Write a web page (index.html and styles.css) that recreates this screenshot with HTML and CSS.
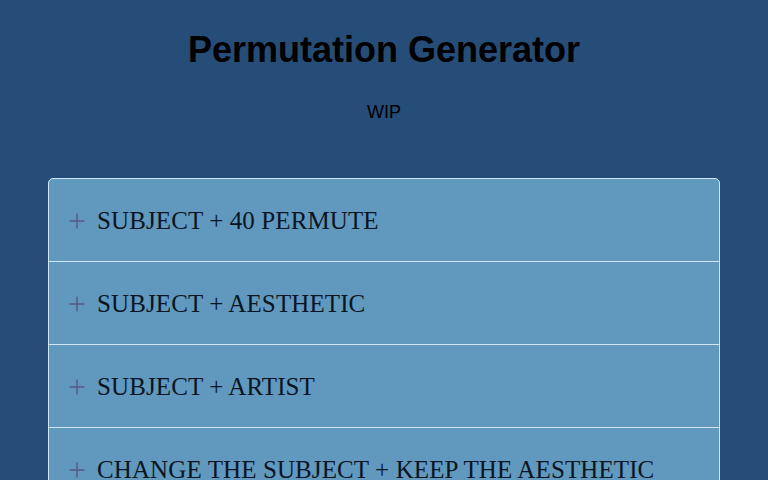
FILE: index.html
```html
<!DOCTYPE html>
<html lang="en">
<head>
<meta charset="utf-8">
<title>Permutation Generator</title>
<link rel="stylesheet" href="styles.css">
</head>
<body>
<main class="page">
  <h1 class="title">Permutation Generator</h1>
  <p class="subtitle">WIP</p>
  <section class="accordion">
    <div class="item">
      <svg class="plus" viewBox="0 0 16 16" width="16" height="16"><path d="M8 0.5V15.5M0.5 8H15.5"/></svg>
      <span class="label">SUBJECT + 40 PERMUTE</span>
    </div>
    <div class="item">
      <svg class="plus" viewBox="0 0 16 16" width="16" height="16"><path d="M8 0.5V15.5M0.5 8H15.5"/></svg>
      <span class="label">SUBJECT + AESTHETIC</span>
    </div>
    <div class="item">
      <svg class="plus" viewBox="0 0 16 16" width="16" height="16"><path d="M8 0.5V15.5M0.5 8H15.5"/></svg>
      <span class="label">SUBJECT + ARTIST</span>
    </div>
    <div class="item">
      <svg class="plus" viewBox="0 0 16 16" width="16" height="16"><path d="M8 0.5V15.5M0.5 8H15.5"/></svg>
      <span class="label">CHANGE THE SUBJECT + KEEP THE AESTHETIC</span>
    </div>
  </section>
</main>
</body>
</html>
```
FILE: styles.css
```css
html, body {
  margin: 0;
  padding: 0;
  background: #264c78;
}
body {
  font-family: "Liberation Sans", Arial, sans-serif;
  color: #000;
}
.page {
  padding: 29px 48px 40px;
  display: flex;
  flex-direction: column;
}
.title {
  margin: 0;
  text-align: center;
  font-size: 36px;
  font-weight: bold;
  line-height: 41px;
}
.subtitle {
  margin: 32px 0 0;
  text-align: center;
  font-size: 18px;
  line-height: 21px;
}
.accordion {
  margin-top: 55px;
  background: #6198bd;
  border: 1px solid #d0e6f5;
  border-radius: 5px;
  overflow: hidden;
}
.item {
  display: flex;
  align-items: center;
  gap: 12px;
  height: 81px;
  padding: 1px 20px 0;
  border-top: 1px solid #d0e6f5;
}
.item:first-child {
  border-top: none;
}
.plus {
  flex: none;
  stroke: #555a80;
  stroke-width: 1.4;
  fill: none;
}
.label {
  font-family: "Liberation Serif", "Times New Roman", serif;
  font-size: 25px;
  letter-spacing: 0.1px;
  color: #0a1524;
}
```
